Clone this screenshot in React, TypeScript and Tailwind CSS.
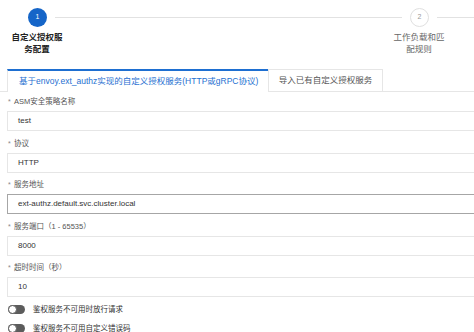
import React from "react";

const FONT = { fontFamily: '"Liberation Sans", "Noto Sans CJK SC", sans-serif' };

type FieldProps = {
  label: string;
  value: string;
  active?: boolean;
};

function Field({ label, value, active = false }: FieldProps) {
  return (
    <div className="flex flex-col">
      <div className="flex h-[12px] items-center text-[7.5px] leading-[12px] text-[#555]">
        <span className="ml-px mr-[2px] w-[4px] text-[7px] text-[#888]">*</span>
        {label}
      </div>
      <div
        className={`mt-[3px] flex h-[20px] w-[480px] items-center border pl-[10px] text-[8px] text-[#333] ${
          active ? "border-[#a6a6a6]" : "border-[#e6e6e6]"
        }`}
      >
        {value}
      </div>
    </div>
  );
}

function Toggle({ label }: { label: string }) {
  return (
    <div className="flex h-[12px] items-center">
      <div className="flex h-[9px] w-[17px] shrink-0 items-center rounded-full bg-[#5c5c5c]">
        <div className="h-[9px] w-[9px] rounded-full border border-[#5c5c5c] bg-white" />
      </div>
      <span className="ml-[8px] text-[7.5px] text-[#333]">{label}</span>
    </div>
  );
}

export default function App() {
  return (
    <div className="h-[332px] w-[474px] overflow-hidden bg-white" style={FONT}>
      {/* STEPS */}
      <div className="h-[64px]">
        <div className="flex items-center pt-[8px]">
          <div className="ml-[28px] flex h-[19px] w-[19px] items-center justify-center rounded-full bg-[#1565c8] text-[7px] text-white">
            1
          </div>
          <div className="ml-[8px] h-px flex-1 bg-[#e2e2e2]" />
          <div className="ml-[8px] flex h-[19px] w-[19px] items-center justify-center rounded-full border border-[#e0e0e0] bg-white text-[7px] text-[#999]">
            2
          </div>
          <div className="ml-[8px] h-px w-[37px] bg-[#e2e2e2]" />
        </div>
        <div className="mt-[4px] flex justify-between">
          <div className="w-[74px] text-center text-[8.5px] font-bold leading-[12px] text-[#222]">
            自定义授权服
            <br />
            务配置
          </div>
          <div className="mr-[25px] w-[60px] text-center text-[8.5px] leading-[12px] text-[#666]">
            工作负载和匹
            <br />
            配规则
          </div>
        </div>
      </div>

      {/* TABS */}
      <div className="mt-[5px] flex h-[23px] border-b border-[#e6e6e6] pl-[7px]">
        <div className="-mb-px flex w-[261px] shrink-0 items-center whitespace-nowrap border-t-2 border-l border-t-[#1e6fd1] border-l-[#e6e6e6] bg-white pl-[11px] text-[8.5px] text-[#1e6fd1]">
          基于envoy.ext_authz实现的自定义授权服务(HTTP或gRPC协议)
        </div>
        <div className="flex w-[115px] shrink-0 items-center justify-center whitespace-nowrap border border-b-0 border-[#e6e6e6] text-[8.5px] text-[#555]">
          导入已有自定义授权服务
        </div>
      </div>

      {/* FORM */}
      <div className="flex flex-col gap-y-[6.5px] pl-[7px] pt-[4px]">
        <Field label="ASM安全策略名称" value="test" />
        <Field label="协议" value="HTTP" />
        <Field label="服务地址" value="ext-authz.default.svc.cluster.local" active />
        <Field label="服务端口（1 - 65535）" value="8000" />
        <Field label="超时时间（秒）" value="10" />
        <div className="flex flex-col gap-y-[7px] pl-px">
          <Toggle label="鉴权服务不可用时放行请求" />
          <Toggle label="鉴权服务不可用自定义错误码" />
        </div>
      </div>
    </div>
  );
}
